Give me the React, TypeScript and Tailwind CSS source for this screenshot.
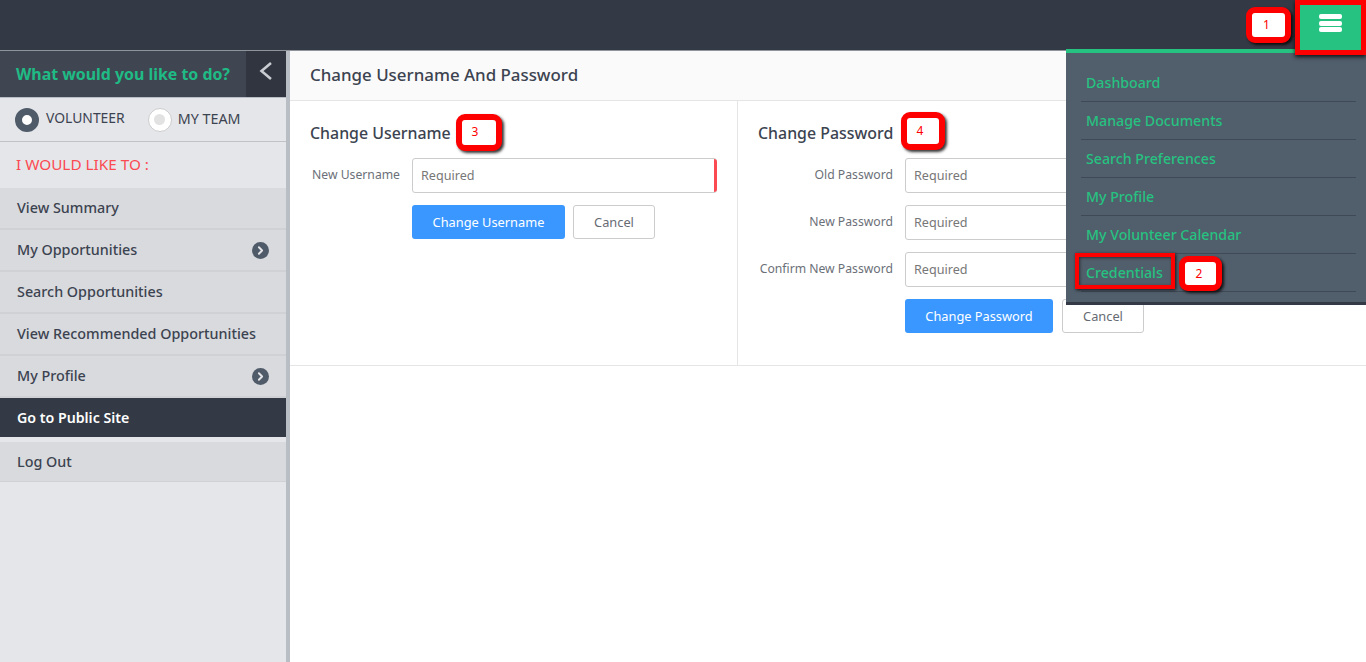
import React from 'react';
import { ChevronRight } from 'lucide-react';

const sideItems = [
  { label: 'View Summary' },
  { label: 'My Opportunities', arrow: true },
  { label: 'Search Opportunities' },
  { label: 'View Recommended Opportunities' },
  { label: 'My Profile', arrow: true },
];

const dropItems = ['Dashboard', 'Manage Documents', 'Search Preferences', 'My Profile', 'My Volunteer Calendar', 'Credentials'];

const Badge = ({ text, className }: { text: string; className: string }) => (
  <div className={`absolute flex items-center justify-center rounded-[9px] border-[6px] border-[#ff0000] bg-white text-[12px] text-[#ff0000] shadow-[2px_2px_3px_rgba(0,0,0,0.8)] ${className}`}>
    {text}
  </div>
);

const Field = ({ label, labelWidth }: { label: string; labelWidth: string }) => (
  <div className="flex items-center">
    <label className={`whitespace-nowrap text-right text-[12.2px] text-[#6b7078] ${labelWidth}`}>{label}</label>
    <input
      placeholder="Required"
      className="ml-3 h-[35px] min-w-0 flex-1 rounded-[3px] border border-[#cccccc] bg-white px-2 text-[12.6px] placeholder:text-[#777777]"
    />
  </div>
);

const App: React.FC = () => {
  return (
    <div className="relative h-[662px] w-[1366px] overflow-hidden bg-white font-['Noto_Sans','Open_Sans',sans-serif] text-[#3c4350]">
      <header className="h-[51px] border-b border-[#8f939a] bg-[#343a45]" />

      <div className="flex h-[611px]">
        <aside className="flex w-[290px] shrink-0 flex-col border-r-4 border-[#b9bdc4] bg-[#e5e6ea]">
          <div className="flex h-[47px] shrink-0 border-b border-[#b9bdc4] bg-[#3f4652]">
            <div className="flex flex-1 items-center pl-4 pt-[2px] text-[15.9px] font-bold text-[#1fbb85]">What would you like to do?</div>
            <div className="flex w-10 justify-center bg-[#30353f] pt-[11px]">
              <svg width="14" height="18" viewBox="0 0 14 18" fill="none" stroke="#c9ccd1" strokeWidth="2.6">
                <polyline points="12,1 2.5,9 12,17" />
              </svg>
            </div>
          </div>

          <div className="flex h-[44px] shrink-0 items-center border-b border-[#bfc2c7] pl-[15px] text-[13.9px]">
            <span className="h-6 w-6 rounded-full border-[7px] border-[#4f5b69] bg-white" />
            <span className="ml-[7px] pb-[2px]">VOLUNTEER</span>
            <span className="ml-[23px] flex h-6 w-6 items-center justify-center rounded-full border border-[#cccccc] bg-white">
              <span className="h-[11px] w-[11px] rounded-full bg-[#e2e2e2]" />
            </span>
            <span className="ml-[6px] pb-[2px] text-[14.3px]">MY TEAM</span>
          </div>

          <div className="flex h-[46px] shrink-0 items-center pb-[1px] pl-4 text-[15.3px] text-[#fb4a52]">I WOULD LIKE TO :</div>

          {sideItems.map((item) => (
            <div key={item.label} className="flex h-[42px] shrink-0 items-center justify-between border-b-2 border-[#cfd1d5] bg-[#d9dade] pl-[17px] pr-[17px] text-[14.35px] font-medium">
              {item.label}
              {item.arrow && (
                <span className="flex h-[17px] w-[17px] items-center justify-center rounded-full bg-[#4f5b69]">
                  <ChevronRight size={13} strokeWidth={3.5} className="text-[#e5e6ea]" />
                </span>
              )}
            </div>
          ))}

          <div className="flex h-[39px] shrink-0 items-center bg-[#343a45] pl-[17px] text-[14.2px] font-semibold text-white">Go to Public Site</div>
          <div className="mt-[5px] flex h-[40px] shrink-0 items-center border-b border-[#cfd1d5] bg-[#d9dade] pl-[17px] text-[14.35px] font-medium">Log Out</div>
        </aside>

        <main className="min-w-0 flex-1">
          <div className="flex h-[50px] items-center border-b border-[#e5e5e5] bg-[#fafafa] pb-[2px] pl-5 text-[16.9px] font-medium">Change Username And Password</div>

          <div className="flex h-[265px] border-b border-[#e5e5e5]">
            <section className="w-[448px] border-r border-[#e5e5e5] pl-5 pr-5">
              <h2 className="mt-[19px] h-[38px] text-[15.9px] font-medium leading-[26px]">Change Username</h2>
              <Field label="New Username" labelWidth="w-[90px]" />
              <div className="ml-[102px] mt-3 flex gap-2">
                <button className="h-[34px] w-[153px] rounded-[3px] bg-[#3a97ff] pt-[1px] text-[12.8px] text-white">Change Username</button>
                <button className="h-[34px] w-[82px] rounded-[3px] border border-[#cccccc] bg-white pt-[1px] text-[12.8px] text-[#666b73]">Cancel</button>
              </div>
            </section>

            <section className="flex-1 pl-5 pr-5">
              <h2 className="mt-[19px] h-[38px] text-[15.9px] font-medium leading-[26px]">Change Password</h2>
              <div className="flex flex-col gap-3">
                <Field label="Old Password" labelWidth="w-[135px]" />
                <Field label="New Password" labelWidth="w-[135px]" />
                <Field label="Confirm New Password" labelWidth="w-[135px]" />
              </div>
              <div className="ml-[147px] mt-3 flex gap-[9px]">
                <button className="h-[34px] w-[148px] rounded-[3px] bg-[#3a97ff] pt-[1px] text-[12.8px] text-white">Change Password</button>
                <button className="h-[34px] w-[82px] rounded-[3px] border border-[#cccccc] bg-white pt-[1px] text-[12.8px] text-[#666b73]">Cancel</button>
              </div>
            </section>
          </div>
        </main>
      </div>

      {/* required marker on the username input */}
      <div className="absolute left-[714px] top-[159px] h-[33px] w-[3px] rounded-r-[3px] bg-[#fb4a52]" />

      {/* user menu */}
      <nav className="absolute left-[1066px] top-[49px] h-[256px] w-[300px] border-b-[3px] border-t-4 border-b-[#343a45] border-t-[#26c281] bg-[#515e6b] pl-[15px] pr-[10px] pt-[11px]">
        {dropItems.map((item) => (
          <div key={item} className="flex h-[38px] items-center border-b border-[#3f4a56] pl-[5px] text-[14.2px] font-medium text-[#26c281]">
            {item}
          </div>
        ))}
      </nav>

      {/* hamburger */}
      <div className="absolute left-[1295px] top-0 flex h-[55px] w-[71px] justify-center border-[5px] border-[#ff0000] bg-[#26c281] pr-[1px] pt-[9px] shadow-[0_2px_4px_rgba(0,0,0,0.8)]">
        <div className="flex h-[18px] w-[23px] flex-col justify-between">
          <span className="h-[5px] rounded-[2px] bg-white" />
          <span className="h-[5px] rounded-[2px] bg-white" />
          <span className="h-[5px] rounded-[2px] bg-white" />
        </div>
      </div>

      {/* annotations */}
      <Badge text="1" className="left-[1246px] top-[7px] h-[36px] w-[45px] pr-[4px]" />
      <Badge text="2" className="left-[1179px] top-[256px] h-[35px] w-[43px] pr-[3px]" />
      <Badge text="3" className="left-[456px] top-[114px] h-[37px] w-[46px] pb-[1px] pr-[8px]" />
      <Badge text="4" className="left-[901px] top-[112px] h-[38px] w-[44px] pr-[6px]" />
      <div className="absolute left-[1075px] top-[253px] h-[36px] w-[100px] border-4 border-[#ff0000] shadow-[1px_1px_3px_rgba(0,0,0,0.8),inset_1px_1px_3px_rgba(0,0,0,0.5)]" />
    </div>
  );
};

export default App;
